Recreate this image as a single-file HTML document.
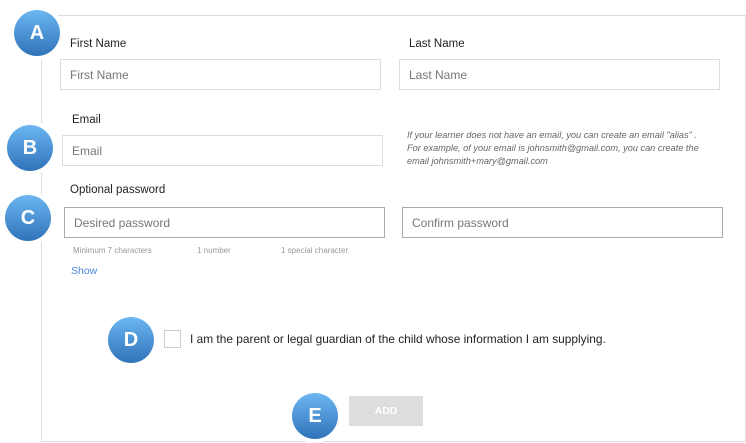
<!DOCTYPE html>
<html><head><style>
body{margin:0;width:746px;height:443px;background:#fff;font-family:"Liberation Sans",sans-serif;position:relative;overflow:hidden}
.a{position:absolute}
.lbl{font-size:11.5px;color:#222}
.in{position:absolute;box-sizing:border-box;border:1px solid #ddd;height:31px;font-size:12px;color:#777;padding-left:9px;line-height:31px}
.c{position:absolute;width:46px;height:46px;border-radius:50%;background:linear-gradient(#6cb6f2,#2f73b9);color:#fff;font-weight:bold;font-size:20px;text-align:center;line-height:46px;box-shadow:0 0 0 4px #fff}
.hint{font-size:8px;color:#999}
</style></head><body>
<div class="a" style="left:41px;top:15px;width:703px;height:425px;border:1px solid #ddd"></div>
<div class="lbl a" style="left:70px;top:38px">First Name</div>
<div class="lbl a" style="left:409px;top:38px">Last Name</div>
<div class="in" style="left:60px;top:59px;width:321px">First Name</div>
<div class="in" style="left:399px;top:59px;width:321px">Last Name</div>
<div class="lbl a" style="left:72px;top:114px">Email</div>
<div class="in" style="left:62px;top:135px;width:321px">Email</div>
<div class="a" style="left:407px;top:129px;font-size:9.2px;line-height:13px;color:#666;font-style:italic">If your learner does not have an email, you can create an email "alias" .<br>For example, of your email is johnsmith@gmail.com, you can create the<br>email johnsmith+mary@gmail.com</div>
<div class="lbl a" style="left:70px;top:184px">Optional password</div>
<div class="in" style="left:64px;top:207px;width:321px;border-color:#aaa">Desired password</div>
<div class="in" style="left:402px;top:207px;width:321px;border-color:#aaa">Confirm password</div>
<div class="hint a" style="left:73px;top:246px">Minimum 7 characters</div>
<div class="hint a" style="left:197px;top:246px">1 number</div>
<div class="hint a" style="left:281px;top:246px">1 special character</div>
<div class="a" style="left:71px;top:265px;font-size:10.5px;color:#4a86d8">Show</div>
<div class="a" style="left:164px;top:330px;width:17px;height:18px;box-sizing:border-box;border:1px solid #ccc"></div>
<div class="a" style="left:190px;top:332px;font-size:11.9px;color:#222">I am the parent or legal guardian of the child whose information I am supplying.</div>
<div class="a" style="left:349px;top:396px;width:74px;height:30px;background:#ddd;color:#fff;font-weight:bold;font-size:10.5px;text-align:center;line-height:30px">ADD</div>
<div class="c" style="left:14px;top:10px">A</div>
<div class="c" style="left:7px;top:125px">B</div>
<div class="c" style="left:5px;top:195px">C</div>
<div class="c" style="left:108px;top:317px">D</div>
<div class="c" style="left:292px;top:393px">E</div>
</body></html>
